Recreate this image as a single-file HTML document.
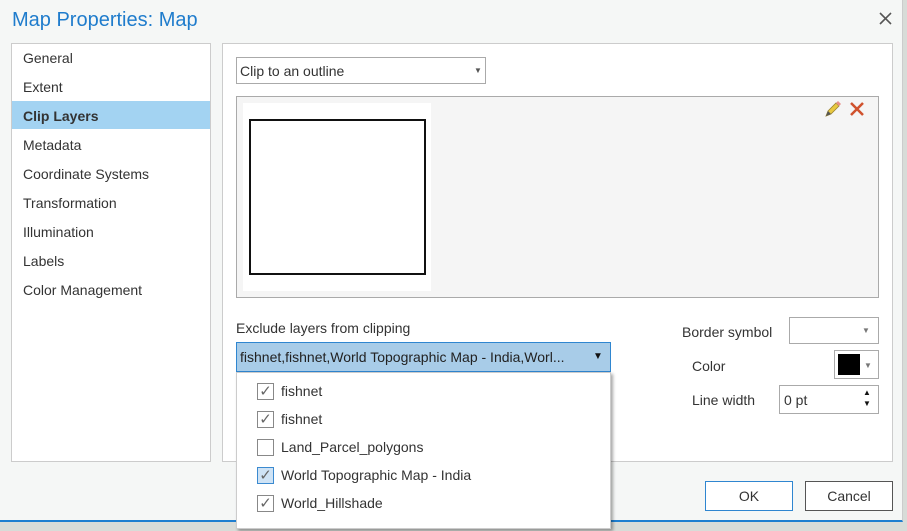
<!DOCTYPE html><html><head><style>
*{box-sizing:border-box;margin:0;padding:0}
body{width:907px;height:531px;overflow:hidden;background:#d8dcd8;font-family:"Liberation Sans",sans-serif;position:relative;color:#333}
.dlg{position:absolute;left:0;top:0;width:903px;height:522px;background:#f5f7f6;border-bottom:2px solid #1e7fd0;border-right:1px solid #ccc}
.a{position:absolute}
.t{font-size:14px}
.cb{position:absolute;left:257px;width:17px;height:17px;border:1px solid #888;background:#fff;color:#666;font-size:15px;line-height:15px;text-align:center}
</style></head><body>
<div class="dlg"></div>
<div class="a" style="left:12px;top:9px;font-size:20px;color:#1f7ccc">Map Properties: Map</div>
<svg class="a" style="left:879px;top:12px" width="13" height="13"><path d="M1 1 L12 12 M12 1 L1 12" stroke="#555" stroke-width="1.6"/></svg>
<div class="a" style="left:11px;top:43px;width:200px;height:419px;background:#fff;border:1px solid #ccc"></div>
<div class="a" style="left:12px;top:101px;width:198px;height:28px;background:#a3d3f2"></div>
<div class="a t" style="left:23px;top:44px;line-height:29px">General<br>Extent<br><b>Clip Layers</b><br>Metadata<br>Coordinate Systems<br>Transformation<br>Illumination<br>Labels<br>Color Management</div>
<div class="a" style="left:222px;top:43px;width:671px;height:419px;background:#fff;border:1px solid #ccc"></div>
<div class="a" style="left:236px;top:57px;width:250px;height:27px;border:1px solid #aaa;background:#fff"></div>
<div class="a t" style="left:240px;top:63px">Clip to an outline</div>
<div class="a" style="left:474px;top:66px;font-size:8px;color:#555">▼</div>
<div class="a" style="left:236px;top:96px;width:643px;height:202px;background:#f5f5f5;border:1px solid #aaa"></div>
<div class="a" style="left:243px;top:103px;width:188px;height:188px;background:#fff"></div>
<div class="a" style="left:249px;top:119px;width:177px;height:156px;border:2px solid #111;background:#fff"></div>
<svg class="a" style="left:822px;top:99px" width="20" height="20"><path d="M4 17 L6 12 L14 4 L17 7 L9 15 Z" fill="#e8c840" stroke="#9a8430" stroke-width="0.8"/><path d="M14 4 L16 2 L19 5 L17 7Z" fill="#e8908a"/><path d="M4 17 L6 12 L9 15Z" fill="#555"/></svg>
<svg class="a" style="left:849px;top:101px" width="16" height="16"><path d="M2 2 L14 14 M14 2 L2 14" stroke="#d0522e" stroke-width="2.5"/></svg>
<div class="a t" style="left:236px;top:320px">Exclude layers from clipping</div>
<div class="a" style="left:236px;top:342px;width:375px;height:30px;background:#a8cce8;border:1px solid #2f86d0"></div>
<div class="a t" style="left:240px;top:349px;color:#222">fishnet,fishnet,World Topographic Map - India,Worl...</div>
<div class="a" style="left:593px;top:351px;font-size:10px;color:#111">▼</div>
<div class="a" style="left:236px;top:372px;width:375px;height:157px;background:#fff;border:1px solid #ccc;box-shadow:2px 2px 3px rgba(0,0,0,.35)"></div>
<div class="a t" style="left:281px;top:377px;line-height:28px">fishnet<br>fishnet<br>Land_Parcel_polygons<br>World Topographic Map - India<br>World_Hillshade</div>
<div class="cb" style="top:383px">✓</div>
<div class="cb" style="top:411px">✓</div>
<div class="cb" style="top:439px"></div>
<div class="cb" style="top:467px;border-color:#3b8ad0;background:#cfe3f5">✓</div>
<div class="cb" style="top:495px">✓</div>
<div class="a t" style="left:682px;top:324px">Border symbol</div>
<div class="a" style="left:789px;top:317px;width:90px;height:27px;border:1px solid #aaa;background:#fff"></div>
<div class="a" style="left:862px;top:326px;font-size:8px;color:#777">▼</div>
<div class="a t" style="left:692px;top:358px">Color</div>
<div class="a" style="left:834px;top:350px;width:45px;height:29px;border:1px solid #aaa;background:#fff"></div>
<div class="a" style="left:838px;top:354px;width:22px;height:21px;background:#000"></div>
<div class="a" style="left:864px;top:361px;font-size:8px;color:#777">▼</div>
<div class="a t" style="left:692px;top:392px">Line width</div>
<div class="a" style="left:779px;top:385px;width:100px;height:29px;border:1px solid #aaa;background:#fff"></div>
<div class="a t" style="left:784px;top:392px">0 pt</div>
<div class="a" style="left:863px;top:387px;font-size:8px;line-height:11px;color:#111">▲<br>▼</div>
<div class="a" style="left:705px;top:481px;width:88px;height:30px;border:1px solid #2f86d0;background:#fff;text-align:center;line-height:28px;font-size:14px">OK</div>
<div class="a" style="left:805px;top:481px;width:88px;height:30px;border:1px solid #555;background:#fff;text-align:center;line-height:28px;font-size:14px">Cancel</div>
</body></html>
